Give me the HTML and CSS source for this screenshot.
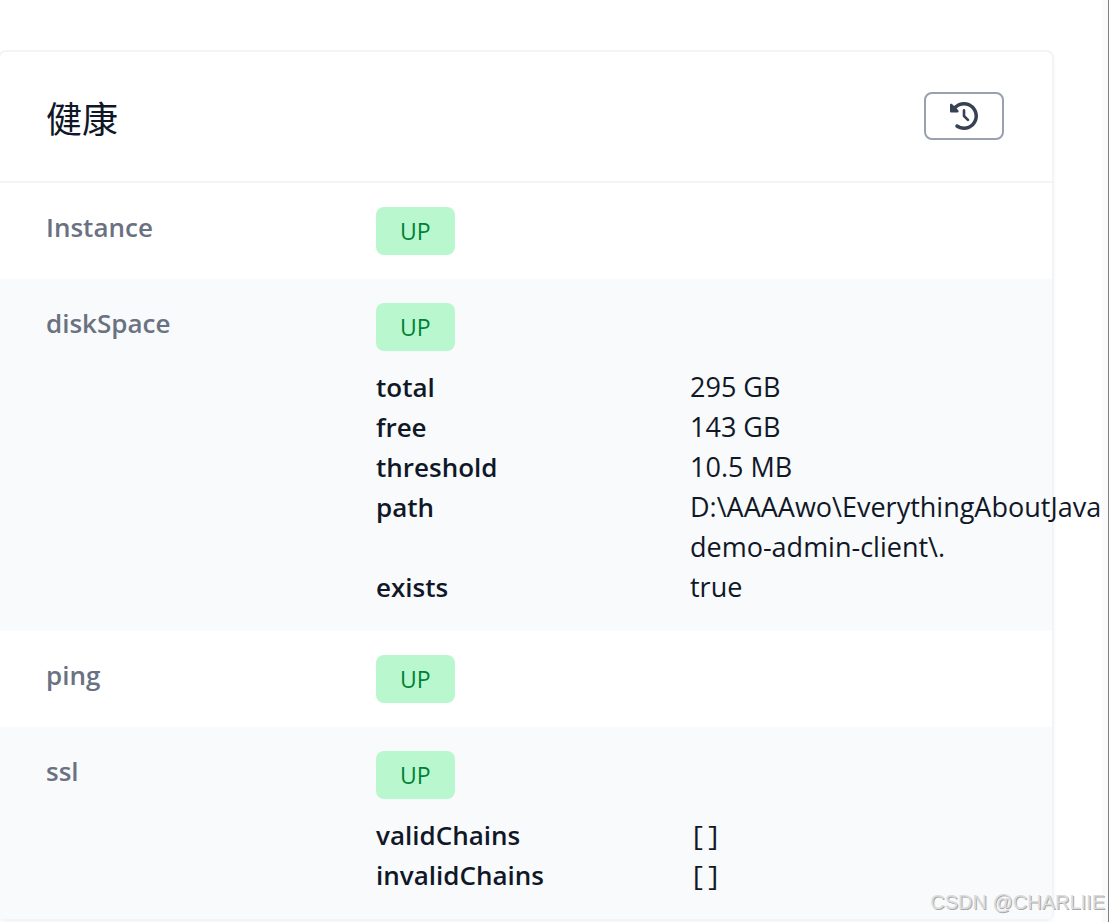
FILE: index.html
```html
<!DOCTYPE html>
<html lang="zh-CN">
<head>
    <meta charset="UTF-8">
    <meta name="viewport" content="width=device-width, initial-scale=1.0">
    <title>健康</title>
    <link rel="stylesheet" href="styles.css">
</head>
<body>
<main class="page">
    <section class="panel">
        <header class="panel-header">
            <h2 class="panel-title">健康</h2>
            <button type="button" class="history-button" aria-label="History">
                <svg class="history-icon" viewBox="0 0 512 512" aria-hidden="true">
                    <path fill="currentColor" d="M75 75L41 41C25.9 25.9 0 36.6 0 57.9V168c0 13.3 10.7 24 24 24H134.1c21.4 0 32.1-25.9 17-41l-30.8-30.8C155 85.5 203 64 256 64c106 0 192 86 192 192s-86 192-192 192c-40.8 0-78.6-12.7-109.7-34.4c-14.5-10.1-34.4-6.6-44.6 7.9s-6.6 34.4 7.9 44.6C151.2 495 201.7 512 256 512c141.4 0 256-114.6 256-256S397.4 0 256 0C185.3 0 121.3 28.7 75 75zm181 53c-13.3 0-24 10.7-24 24V256c0 6.4 2.5 12.5 7 17l72 72c9.4 9.4 24.6 9.4 33.9 0s9.4-24.6 0-33.9l-65-65V152c0-13.3-10.7-24-24-24z"/>
                </svg>
            </button>
        </header>
        <dl class="health-list">
            <div class="health-row">
                <dt>Instance</dt>
                <dd><span class="status">UP</span></dd>
            </div>
            <div class="health-row">
                <dt>diskSpace</dt>
                <dd>
                    <span class="status">UP</span>
                    <table class="details">
                        <tr><th scope="row">total</th><td>295 GB</td></tr>
                        <tr><th scope="row">free</th><td>143 GB</td></tr>
                        <tr><th scope="row">threshold</th><td>10.5 MB</td></tr>
                        <tr><th scope="row">path</th><td>D:\AAAAwo\EverythingAboutJava<br>demo-admin-client\.</td></tr>
                        <tr><th scope="row">exists</th><td>true</td></tr>
                    </table>
                </dd>
            </div>
            <div class="health-row">
                <dt>ping</dt>
                <dd><span class="status">UP</span></dd>
            </div>
            <div class="health-row">
                <dt>ssl</dt>
                <dd>
                    <span class="status">UP</span>
                    <table class="details">
                        <tr><th scope="row">validChains</th><td><span class="mono">[]</span></td></tr>
                        <tr><th scope="row">invalidChains</th><td><span class="mono">[]</span></td></tr>
                    </table>
                </dd>
            </div>
        </dl>
    </section>
</main>
<div class="watermark">CSDN @CHARLIIE</div>
</body>
</html>
```

FILE: styles.css
```css
/* General styles */
* {
    box-sizing: border-box;
}

body {
    margin: 0;
    background-color: #fff;
    color: #101828;
    font-family: "Segoe UI", "Open Sans", "Noto Sans CJK SC", sans-serif;
    font-size: 26px;
    line-height: 40px;
    overflow: hidden;
}

/* Page with the scrollbar edge on the right */
.page {
    min-height: 100vh;
    padding: 50px 48px 0 0;
    border-right: 1px solid #808080;
    box-shadow: inset -6px 0 0 #fafafa;
}

/* Panel styles */
.panel {
    margin-right: 6px;
    margin-left: -2px;
    border: 2px solid #f3f4f6;
    border-radius: 8px;
    box-shadow: 0 2px 4px rgba(0, 0, 0, 0.04);
}

.panel-header {
    display: flex;
    align-items: flex-start;
    justify-content: space-between;
    padding: 40px 48px 41px 46px;
    border-bottom: 2px solid #f3f4f6;
}

.panel-title {
    height: 48px;
    margin: 0;
    font-size: 36px;
    font-weight: 400;
    line-height: 56px;
}

.history-button {
    display: flex;
    align-items: center;
    justify-content: center;
    width: 80px;
    height: 48px;
    padding: 0;
    border: 2px solid #99a1af;
    border-radius: 8px;
    background-color: #fff;
    color: #364153;
    cursor: pointer;
}

.history-icon {
    width: 28px;
    height: 28px;
}

/* Health rows */
.health-list {
    margin: 0;
}

.health-row {
    display: grid;
    grid-template-columns: repeat(3, 1fr);
    column-gap: 32px;
    padding: 24px 48px 24px 46px;
}

.health-row:nth-child(even) {
    background-color: #f9fafb;
}

.health-row dt {
    color: #6a7282;
    font-weight: 600;
}

.health-row dd {
    grid-column: span 2;
    margin: 0;
}

.status {
    display: block;
    width: fit-content;
    padding: 0 24px;
    border-radius: 8px;
    background-color: #b9f8cf;
    color: #008236;
    font-size: 23px;
    line-height: 48px;
}

.details {
    width: 100%;
    margin-top: 16px;
    border-collapse: collapse;
    table-layout: fixed;
}

.details th,
.details td {
    height: 40px;
    padding: 0;
    text-align: left;
    vertical-align: top;
    white-space: nowrap;
}

.details th {
    font-weight: 600;
}

.details td {
    font-size: 27px;
}

.mono {
    font-family: "Liberation Mono", monospace;
    font-size: 26px;
    line-height: 1;
}

.watermark {
    position: absolute;
    right: 4px;
    bottom: 4px;
    color: #dcdcdc;
    font-family: "Liberation Sans", Arial, sans-serif;
    font-size: 20px;
    line-height: 32px;
    text-shadow: 1px 1px 0 #aaa;
}
```
